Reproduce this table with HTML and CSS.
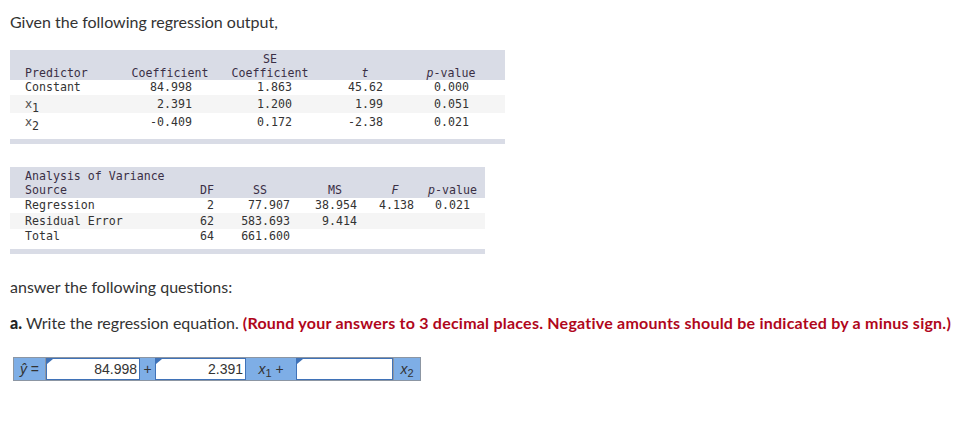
FILE: index.html
```html
<!DOCTYPE html>
<html>
<head>
<meta charset="utf-8">
<link rel="stylesheet" href="styles.css">
</head>
<body>
<div class="page">
  <p class="intro">Given the following regression output,</p>

  <table class="out t1">
    <colgroup><col class="a1"><col class="a2"><col class="a3"><col class="a4"><col class="a5"></colgroup>
    <thead>
      <tr class="h1"><th class="l"></th><th></th><th>SE</th><th></th><th class="pv"></th></tr>
      <tr class="h2"><th class="l">Predictor</th><th>Coefficient</th><th>Coefficient</th><th><i>t</i></th><th class="pv"><i>p</i>-value</th></tr>
    </thead>
    <tbody>
      <tr class="r15"><td class="l">Constant</td><td class="c2">84.998</td><td class="c3">1.863</td><td class="c4">45.62</td><td class="c5">0.000</td></tr>
      <tr class="r18 alt"><td class="l"><span class="var">x</span><sub>1</sub></td><td class="c2">2.391</td><td class="c3">1.200</td><td class="c4">1.99</td><td class="c5">0.051</td></tr>
      <tr class="r18"><td class="l"><span class="var">x</span><sub>2</sub></td><td class="c2">-0.409</td><td class="c3">0.172</td><td class="c4">-2.38</td><td class="c5">0.021</td></tr>
    </tbody>
  </table>
  <div class="bar bar1"></div>

  <table class="out t2">
    <colgroup><col class="b1"><col class="b2"><col class="b3"><col class="b4"><col class="b5"><col class="b6"></colgroup>
    <thead>
      <tr class="h1"><th class="l" colspan="6">Analysis of Variance</th></tr>
      <tr class="h2b"><th class="l">Source</th><th class="df">DF</th><th>SS</th><th>MS</th><th><i>F</i></th><th><i>p</i>-value</th></tr>
    </thead>
    <tbody>
      <tr class="r15"><td class="l">Regression</td><td class="df">2</td><td class="ss">77.907</td><td class="ms">38.954</td><td class="f">4.138</td><td class="p">0.021</td></tr>
      <tr class="r16 alt"><td class="l">Residual Error</td><td class="df">62</td><td class="ss">583.693</td><td class="ms">9.414</td><td class="f"></td><td class="p"></td></tr>
      <tr class="r15"><td class="l">Total</td><td class="df">64</td><td class="ss">661.600</td><td class="ms"></td><td class="f"></td><td class="p"></td></tr>
    </tbody>
  </table>
  <div class="bar bar2"></div>

  <p class="q">answer the following questions:</p>
  <p class="qa"><b>a.</b> Write the regression equation. <span class="red">(Round your answers to 3 decimal places. Negative amounts should be indicated by a minus sign.)</span></p>

  <div class="eq">
    <div class="lbl yhat"><span><i>ŷ</i>&nbsp;=</span></div>
    <div class="inp w1"><span class="flag"></span>84.998</div>
    <div class="lbl plus"><span>+</span></div>
    <div class="inp w2"><span class="flag"></span>2.391</div>
    <div class="lbl x1"><span><i>x</i><sub>1</sub>&nbsp;+</span></div>
    <div class="inp w3"><span class="flag"></span></div>
    <div class="lbl x2"><span><i>x</i><sub>2</sub></span></div>
  </div>
</div>
</body>
</html>
```

FILE: styles.css
```css
html, body { margin: 0; padding: 0; background: #fff; }
.page { padding: 0 10px; font-family: Lato, "Open Sans", sans-serif; color: #333; }

.intro { margin: 11px 0 0; font-size: 16px; line-height: 22px; }

.out {
  border-collapse: collapse;
  table-layout: fixed;
  font-family: "DejaVu Sans Mono", monospace;
  font-size: 11.6px;
  color: #333;
  white-space: pre;
}
.out th, .out td { padding: 0; font-weight: normal; height: 15px; line-height: 15px; }
.out thead tr { background: #d9dce6; }
.out th { text-align: center; color: #3a2f45; }
.out tr.h1 th { height: 16px; line-height: 14px; vertical-align: bottom; }
.out tr.h2 th { height: 14px; line-height: 14px; }
.out tr.h2b th { height: 15px; line-height: 14px; vertical-align: top; }
.out .l { text-align: left; padding-left: 15px; }
.out tr.alt { background: #f5f5f5; }
.out tr.r15 td { height: 15px; }
.out tr.r16 td { height: 16px; }
.out tr.r18 td { height: 18px; }

.t1 { width: 495px; margin-top: 17px; }
.a1 { width: 115px; } .a2 { width: 90px; } .a3 { width: 110px; } .a4 { width: 80px; } .a5 { width: 100px; }
.t1 th.pv { padding-right: 8px; }
.c2, .c3, .c4, .c5 { text-align: right; }
.c2 { padding-right: 23px !important; }
.c3 { padding-right: 33px !important; }
.c4 { padding-right: 22px !important; }
.c5 { padding-right: 36px !important; }

.var { font-family: "DejaVu Sans", sans-serif; color: #555; font-size: 12px; }
.out sub { font-size: 11.6px; vertical-align: -4px; line-height: 0; }

.bar { background: #d9dce6; height: 5px; margin-top: 8px; }
.bar1 { width: 495px; }
.bar2 { width: 475px; margin-top: 5px; }

.t2 { width: 475px; margin-top: 23px; }
.b1 { width: 170px; } .b2 { width: 40px; } .b3 { width: 80px; } .b4 { width: 70px; } .b5 { width: 50px; } .b6 { width: 65px; }
.out .df { text-align: right; padding-right: 6px; }
.out .ss { text-align: right; padding-right: 10px; }
.out .ms { text-align: right; padding-right: 13px; }
.out .f { text-align: right; padding-right: 6px; }
.out .p { text-align: center; }

.q { margin: 22px 0 0; font-size: 16px; line-height: 22px; }
.qa { margin: 14px 0 0; font-size: 16px; line-height: 22px; }
.qa b { font-weight: 900; color: #222; }
.red { color: #b0061b; font-weight: 700; letter-spacing: 0.23px; }

.eq {
  display: flex;
  margin: 23px 0 0 3px;
  width: fit-content;
  border: 1px solid #8c96a3;
  background: #7eaee6;
  height: 22px;
  font-family: "Liberation Sans", Arial, sans-serif;
  font-size: 14px;
  color: #333;
}
.lbl { display: flex; align-items: center; justify-content: center; height: 22px; }
.lbl i { font-style: italic; }
.lbl sub { font-size: 11px; vertical-align: -3px; line-height: 0; }
.yhat { width: 31px; border-right: 1px solid #8c96a3; }
.plus { width: 15px; }
.x1 { width: 50px; }
.x2 { width: 26px; border-left: 1px solid #8c96a3; }
.inp {
  position: relative;
  background: #fff;
  border: 1px solid #3f72b8;
  height: 20px;
  line-height: 20px;
  text-align: right;
  padding-right: 2px;
  box-sizing: content-box;
}
.w1 { width: 90px; }
.w2 { width: 87px; }
.w3 { width: 93px; }
.flag {
  position: absolute;
  left: 0;
  top: 0;
  width: 0; height: 0;
  border-top: 5px solid #3f72b8;
  border-right: 6px solid transparent;
}
```
